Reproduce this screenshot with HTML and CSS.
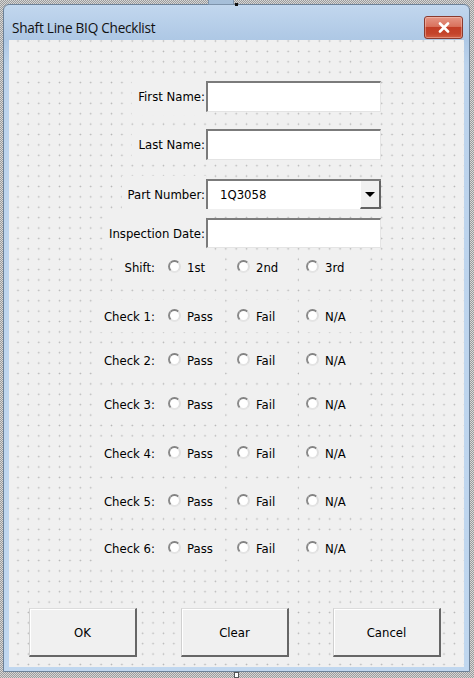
FILE: index.html
```html
<!DOCTYPE html>
<html>
<head>
<meta charset="utf-8">
<title>Shaft Line BIQ Checklist</title>
<link rel="stylesheet" href="styles.css">
</head>
<body>
<div class="handle-top"></div>
<div class="handle-dot"></div>
<div class="handle-bottom"></div>
<div class="window">
  <div class="titlebar">
    <span class="title">Shaft Line BIQ Checklist</span>
    <span class="close">
      <svg width="12" height="11" viewBox="0 0 12 11"><path d="M2 1.5L10 9.5M10 1.5L2 9.5" stroke="#fff" stroke-width="2.6" stroke-linecap="round"/></svg>
    </span>
  </div>
  <div class="client">
    <div class="field">
      <span class="flabel">First Name:</span>
      <div class="textbox"></div>
    </div>
    <div class="field mt17">
      <span class="flabel">Last Name:</span>
      <div class="textbox"></div>
    </div>
    <div class="field h30 mt19">
      <span class="flabel">Part Number:</span>
      <div class="combo">
        <span class="combo-text">1Q3058</span>
        <span class="dropbtn"><svg width="10" height="5" viewBox="0 0 10 5"><path d="M0 0H10L5 5Z" fill="#000"/></svg></span>
      </div>
    </div>
    <div class="field h30 mt9">
      <span class="flabel">Inspection Date:</span>
      <div class="textbox"></div>
    </div>

    <div class="optrow mt6">
      <span class="olabel">Shift:</span>
      <span class="opt"><i class="radio"></i>1st</span>
      <span class="opt"><i class="radio"></i>2nd</span>
      <span class="opt"><i class="radio"></i>3rd</span>
    </div>
    <div class="optrow mt23">
      <span class="olabel">Check 1:</span>
      <span class="opt"><i class="radio"></i>Pass</span>
      <span class="opt"><i class="radio"></i>Fail</span>
      <span class="opt"><i class="radio"></i>N/A</span>
    </div>
    <div class="optrow mt18">
      <span class="olabel">Check 2:</span>
      <span class="opt"><i class="radio"></i>Pass</span>
      <span class="opt"><i class="radio"></i>Fail</span>
      <span class="opt"><i class="radio"></i>N/A</span>
    </div>
    <div class="optrow mt18">
      <span class="olabel">Check 3:</span>
      <span class="opt"><i class="radio"></i>Pass</span>
      <span class="opt"><i class="radio"></i>Fail</span>
      <span class="opt"><i class="radio"></i>N/A</span>
    </div>
    <div class="optrow mt23">
      <span class="olabel">Check 4:</span>
      <span class="opt"><i class="radio"></i>Pass</span>
      <span class="opt"><i class="radio"></i>Fail</span>
      <span class="opt"><i class="radio"></i>N/A</span>
    </div>
    <div class="optrow mt22">
      <span class="olabel">Check 5:</span>
      <span class="opt"><i class="radio"></i>Pass</span>
      <span class="opt"><i class="radio"></i>Fail</span>
      <span class="opt"><i class="radio"></i>N/A</span>
    </div>
    <div class="optrow mt21">
      <span class="olabel">Check 6:</span>
      <span class="opt"><i class="radio"></i>Pass</span>
      <span class="opt"><i class="radio"></i>Fail</span>
      <span class="opt"><i class="radio"></i>N/A</span>
    </div>

    <div class="buttons">
      <div class="btn">OK</div>
      <div class="btn">Clear</div>
      <div class="btn">Cancel</div>
    </div>
  </div>
</div>
</body>
</html>
```

FILE: styles.css
```css
* { box-sizing: border-box; }

html, body {
  margin: 0;
  padding: 0;
}

body {
  width: 474px;
  height: 678px;
  overflow: hidden;
  position: relative;
  background: repeating-conic-gradient(#9c9c9c 0 25%, #d6d6d6 0 50%) 0 0 / 2px 2px;
  font-family: "DejaVu Sans Condensed", "DejaVu Sans", sans-serif;
  font-size: 13px;
  color: #000;
}

/* editor selection handles */
.handle-top {
  position: absolute;
  left: 208px;
  top: 0;
  width: 26px;
  height: 5px;
  background: #a6bfd9;
  border: 1px solid #7d93ab;
  border-top: none;
}
.handle-dot {
  position: absolute;
  left: 235px;
  top: 3px;
  width: 3px;
  height: 3px;
  background: #111;
  z-index: 2;
}
.handle-bottom {
  position: absolute;
  left: 234px;
  top: 672px;
  width: 5px;
  height: 6px;
  background: #fff;
  border: 1px solid #555;
  z-index: 2;
}

.window {
  margin: 4px 4px 6px 3px;
  height: 668px;
  border: 1px solid #6d8299;
  border-radius: 6px 6px 0 0;
  background: linear-gradient(#c2d7ee 0, #aec8e5 34px, #bcd3ec 60px, #c0d7ef 100%);
  padding: 0 5px 4px 5px;
  display: flex;
  flex-direction: column;
}

.titlebar {
  height: 35px;
  display: flex;
  justify-content: space-between;
  align-items: flex-start;
  flex: none;
}

.title {
  font-family: "Open Sans", "Noto Sans", sans-serif;
  font-size: 13.6px;
  letter-spacing: -0.25px;
  color: #111;
  padding: 13px 0 0 3px;
  line-height: 20px;
}

.close {
  margin: 11px 1px 0 0;
  width: 39px;
  height: 23px;
  border: 1px solid #8a3a2e;
  border-radius: 3px;
  background: linear-gradient(#e59686 0, #d9725d 45%, #c23d26 50%, #c4442b 80%, #d25f45 100%);
  box-shadow: inset 0 0 0 1px rgba(255, 220, 210, 0.4);
  display: flex;
  align-items: center;
  justify-content: center;
}

.client {
  flex: 1;
  background-color: #f0f0f0;
  background-image: radial-gradient(circle, #b4b4b4 0.7px, transparent 1.05px);
  background-size: 10.4px 10.4px;
  background-position: 3.8px -4.2px;
  padding: 41px 0 8px 0;
  display: flex;
  flex-direction: column;
}

/* text fields */
.field {
  display: grid;
  grid-template-columns: 197px 175px;
  height: 31px;
  flex: none;
}
.field.h30 { height: 30px; }

.flabel {
  justify-self: end;
  background: #f0f0f0;
  padding: 0 1px 0 6px;
  margin: -3px 0;
  display: flex;
  align-items: center;
  white-space: nowrap;
}

.textbox {
  background: #fff;
  border-style: solid;
  border-width: 2px 1px 1px 2px;
  border-color: #7b7b7b #e4e4e4 #e4e4e4 #7b7b7b;
}

.combo {
  background: #fff;
  border-style: solid;
  border-width: 2px 0 0 2px;
  border-color: #7b7b7b;
  display: flex;
  align-items: center;
}
.combo-text {
  flex: 1;
  padding-left: 12px;
  padding-bottom: 1px;
}
.dropbtn {
  width: 21px;
  align-self: stretch;
  background: #f0f0f0;
  border-left: 1px solid #ffffff;
  border-right: 2px solid #636363;
  border-bottom: 2px solid #636363;
  display: flex;
  align-items: center;
  justify-content: center;
}

/* option rows */
.optrow {
  display: grid;
  grid-template-columns: 147px 64px 64px 64px;
  column-gap: 5px;
  height: 26px;
  flex: none;
}

.olabel {
  justify-self: end;
  background: #f0f0f0;
  padding: 0 1px 0 6px;
  margin: -3px 0;
  display: flex;
  align-items: center;
  white-space: nowrap;
}

.opt {
  background: #f0f0f0;
  display: flex;
  align-items: center;
  gap: 6px;
  padding-left: 7px;
  margin: -3px 0;
}

.radio {
  display: block;
  width: 13px;
  height: 13px;
  border-radius: 50%;
  background: #fff;
  border: 2px solid;
  border-color: #838383 #dedede #e4e4e4 #8a8a8a;
  flex: none;
  margin-top: -1px;
}

/* spacing between rows */
.mt6 { margin-top: 6px; }
.mt9 { margin-top: 9px; }
.mt17 { margin-top: 17px; }
.mt18 { margin-top: 18px; }
.mt19 { margin-top: 19px; }
.mt21 { margin-top: 21px; }
.mt22 { margin-top: 22px; }
.mt23 { margin-top: 23px; }

/* command buttons */
.buttons {
  margin-top: 47px;
  display: flex;
  gap: 44px;
  padding-left: 20px;
  flex: none;
}

.btn {
  width: 108px;
  height: 49px;
  background: #f0f0f0;
  border-style: solid;
  border-width: 1px 2px 2px 1px;
  border-color: #dcdcdc #666666 #666666 #d0d0d0;
  box-shadow: inset 1px 1px 0 #ffffff;
  display: flex;
  align-items: center;
  justify-content: center;
}
```
